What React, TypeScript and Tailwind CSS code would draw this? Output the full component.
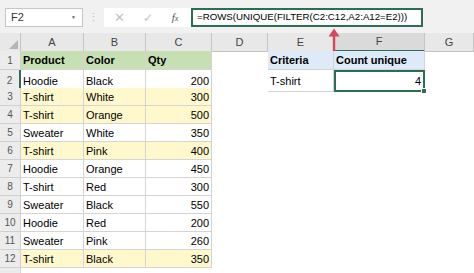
import React from "react";

type Row = { n: number; a: string; b: string; c: string; hl?: boolean };

const rows: Row[] = [
  { n: 2, a: "Hoodie", b: "Black", c: "200" },
  { n: 3, a: "T-shirt", b: "White", c: "300", hl: true },
  { n: 4, a: "T-shirt", b: "Orange", c: "500", hl: true },
  { n: 5, a: "Sweater", b: "White", c: "350" },
  { n: 6, a: "T-shirt", b: "Pink", c: "400", hl: true },
  { n: 7, a: "Hoodie", b: "Orange", c: "450" },
  { n: 8, a: "T-shirt", b: "Red", c: "300" },
  { n: 9, a: "Sweater", b: "Black", c: "550" },
  { n: 10, a: "Hoodie", b: "Red", c: "200" },
  { n: 11, a: "Sweater", b: "Pink", c: "260" },
  { n: 12, a: "T-shirt", b: "Black", c: "350", hl: true },
];

const cols = ["A", "B", "C", "D", "E", "F", "G"];
const grid = "grid grid-cols-[21px_63px_62px_66px_56px_66px_91px_1fr]";
const cell = "h-full flex items-center px-[2px] pt-[1px] border-r border-b border-[#d4d4d4] text-[11px] text-black whitespace-nowrap overflow-hidden";
const rowHead = "h-full flex items-center justify-center bg-[#ececec] border-r border-b border-[#d0d0d0] text-[10px] text-[#555]";

export default function App() {
  return (
    <div className="relative w-[474px] h-[273px] overflow-hidden bg-white font-['Liberation_Sans',Arial,sans-serif]">
      {/* formula bar */}
      <div className="h-[33px] bg-[#f1f1f1] flex items-start pt-[8px] pl-[5px]">
        <div className="w-[78px] h-[19px] bg-white border border-[#c6c6c6] flex items-center justify-between pl-[5px] pr-[6px]">
          <span className="text-[11px] text-[#333]">F2</span>
          <span className="text-[5px] text-[#666]">▼</span>
        </div>
        <div className="w-[21px] h-[19px] flex items-center justify-center text-[11px] text-[#b8b8b8]">⋮</div>
        <div className="w-[87px] h-[19px] bg-white flex items-center">
          <span className="w-[30px] text-center text-[13px] text-[#c4c4c4]">✕</span>
          <span className="w-[28px] text-center text-[12px] text-[#c4c4c4]">✓</span>
          <span className="w-[26px] text-center text-[11px] italic text-[#555] font-['Liberation_Serif',serif]">f<span className="text-[8px]">x</span></span>
        </div>
        <div className="w-[232px] h-[19px] bg-white border-2 border-[#2b6e55] flex items-center pl-[4px]">
          <span className="text-[9.7px] text-black whitespace-nowrap">=ROWS(UNIQUE(FILTER(C2:C12,A2:A12=E2)))</span>
        </div>
      </div>

      {/* column headers */}
      <div className={`${grid} h-[18px] bg-[#e8e8e8]`}>
        <div className="h-full border-r border-b border-[#c4c4c4] flex items-end justify-end pr-[2px] pb-[2px]">
          <svg width="9" height="9" viewBox="0 0 9 9"><path d="M9 0V9H0Z" fill="#b5b5b5" /></svg>
        </div>
        {cols.map((c) => (
          <div
            key={c}
            className={`h-full flex items-center justify-center text-[11px] text-[#444] border-r border-[#c4c4c4] ${c === "F" ? "bg-[#dadada] border-b-2 border-b-[#2b6e55]" : "border-b"}`}
          >
            {c}
          </div>
        ))}
      </div>

      {/* row 1 */}
      <div className={`${grid} h-[19px]`}>
        <div className={rowHead}>1</div>
        <div className={`${cell} bg-[#c6e0b4] font-bold`}>Product</div>
        <div className={`${cell} bg-[#c6e0b4] font-bold`}>Color</div>
        <div className={`${cell} bg-[#c6e0b4] font-bold`}>Qty</div>
        <div />
        <div className={`${cell} bg-[#dcebf7] font-bold`}>Criteria</div>
        <div className={`${cell} bg-[#dcebf7] font-bold`}>Count unique</div>
        <div />
      </div>

      {rows.map((r) => (
        <div key={r.n} className={`${grid} h-[18px]`}>
          <div className={r.n === 2 ? `${rowHead} bg-[#d9d9d9] border-r-2 border-r-[#2b6e55]` : rowHead}>{r.n}</div>
          <div className={`${cell} ${r.hl ? "bg-[#fff8cc]" : ""}`}>{r.a}</div>
          <div className={`${cell} ${r.hl ? "bg-[#fff8cc]" : ""}`}>{r.b}</div>
          <div className={`${cell} justify-end ${r.hl ? "bg-[#fff8cc]" : ""}`}>{r.c}</div>
          <div />
          {r.n === 2 ? (
            <>
              <div className={cell}>T-shirt</div>
              <div className="relative h-full flex items-center justify-end pr-[2px] pt-[1px] border-2 border-[#2b6e55] text-[11px] text-black">
                4
                <span className="absolute -right-[4px] -bottom-[4px] w-[6px] h-[6px] bg-[#2b6e55] border border-white" />
              </div>
            </>
          ) : (
            <>
              <div />
              <div />
            </>
          )}
          <div />
        </div>
      ))}

      {/* row 13, cut off by the window */}
      <div className={`${grid} h-[18px]`}>
        <div className="h-full bg-[#ececec] border-r border-[#d0d0d0]" />
      </div>

      {/* red arrow pointing at formula */}
      <svg className="absolute left-[327px] top-[27px]" width="14" height="24" viewBox="0 0 14 24">
        <path d="M7 4V24" stroke="#d9475c" strokeWidth="2.5" />
        <path d="M1.5 9.5L7 1.5L12.5 9.5Z" fill="#d9475c" />
      </svg>
    </div>
  );
}
